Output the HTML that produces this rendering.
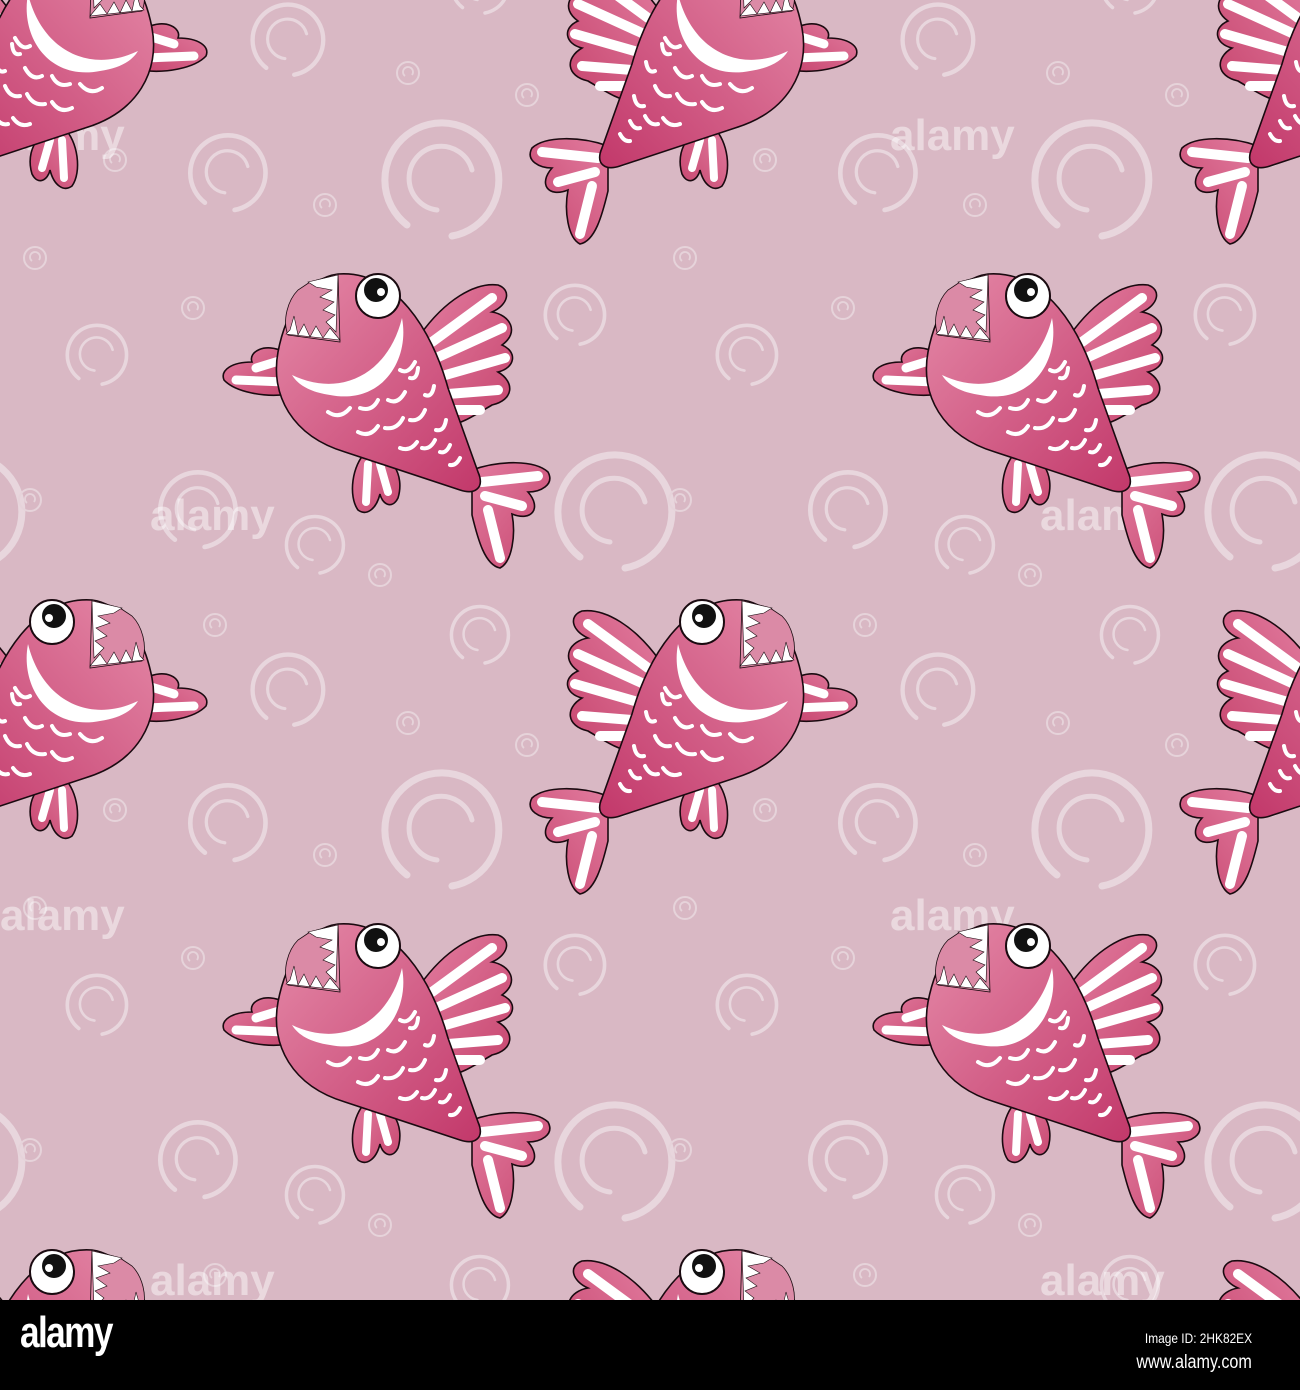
<!DOCTYPE html>
<html><head><meta charset="utf-8"><style>
html,body{margin:0;padding:0;background:#000;width:1300px;height:1390px;overflow:hidden}
#w{position:relative;width:1300px;height:1390px;overflow:hidden;background:#000}
svg{position:absolute;left:0;top:0}
.bar{position:absolute;left:0;top:1300px;width:1300px;height:90px;background:#000;color:#fff;font-family:"Liberation Sans",sans-serif;overflow:hidden}
</style></head><body><div id="w">
<svg width="1300" height="1300" viewBox="0 0 1300 1300">
<defs>
<linearGradient id="g" x1="0" y1="0" x2="1" y2="1">
<stop offset="0" stop-color="#e58aa8"/><stop offset="1" stop-color="#c2386a"/></linearGradient>
<linearGradient id="gf" x1="0" y1="0" x2="1" y2="1">
<stop offset="0" stop-color="#e27c9f"/><stop offset="1" stop-color="#c7466f"/></linearGradient>
<g id="sw" fill="none" stroke="#e8d6dd" stroke-linecap="round">
<path d="M-35,45 A57,57 0 1 1 10,56" stroke-width="7"/>
<path d="M-5,30 A32,32 0 1 1 30,-10" stroke-width="5"/>
</g>
<g id="sws" fill="none" stroke="#e6d3da">
<circle r="55" stroke-width="10"/><path d="M-15,15 A25,25 0 1 1 20,10" stroke-width="9"/>
</g>
<pattern id="p" patternUnits="userSpaceOnUse" x="0" y="0" width="650" height="650">
<use href="#sw" transform="translate(442,180)"/>
<use href="#sw" transform="translate(615,512)"/>
<use href="#sw" transform="translate(-35,512)"/>
<use href="#sw" transform="translate(228,173) scale(0.66)"/>
<use href="#sw" transform="translate(198,510) scale(0.66)"/>
<use href="#sw" transform="translate(575,315) scale(0.52)"/>
<use href="#sw" transform="translate(97,355) scale(0.52)"/>
<use href="#sw" transform="translate(288,40) scale(0.62)"/>
<use href="#sw" transform="translate(480,-15) scale(0.5)"/>
<use href="#sw" transform="translate(480,635) scale(0.5)"/>
<use href="#sw" transform="translate(315,545) scale(0.5)"/>
<use href="#sws" transform="translate(408,73) scale(0.2)"/>
<use href="#sws" transform="translate(527,95) scale(0.2)"/>
<use href="#sws" transform="translate(325,205) scale(0.2)"/>
<use href="#sws" transform="translate(35,258) scale(0.2)"/>
<use href="#sws" transform="translate(193,308) scale(0.2)"/>
<use href="#sws" transform="translate(408,385) scale(0.2)"/>
<use href="#sws" transform="translate(380,575) scale(0.2)"/>
<use href="#sws" transform="translate(215,625) scale(0.2)"/>
<use href="#sws" transform="translate(30,500) scale(0.2)"/>
<use href="#sws" transform="translate(620,155) scale(0.2)"/>
<use href="#sws" transform="translate(115,160) scale(0.2)"/>
</pattern>
<g id="fish" stroke="#1a0a10" stroke-width="1.6">
<!-- dorsal fin -->
<path d="M210,75 C235,40 265,22 288,25 C302,30 298,45 282,52 C300,55 310,72 292,85 C308,92 305,108 288,112 C305,122 304,140 282,145 C265,155 250,165 238,165 Z" fill="url(#gf)"/>
<path d="M222,82 L282,38 M226,98 L292,68 M232,116 L295,98 M238,134 L288,130 M244,150 L270,150" stroke="#fff" stroke-width="10" fill="none" stroke-linecap="round"/>
<!-- tail -->
<path d="M262,210 C290,200 325,200 338,212 C345,225 330,232 318,232 C332,248 322,262 302,254 C306,275 302,302 290,308 C275,305 268,280 262,255 Z" fill="url(#gf)"/>
<path d="M272,222 L328,216 M275,236 L312,246 M278,250 L290,298" stroke="#fff" stroke-width="10" fill="none" stroke-linecap="round"/>
<!-- bottom fin -->
<path d="M156,192 C182,192 195,215 188,238 C182,250 172,244 170,234 C166,250 156,256 148,250 C138,236 142,205 156,192 Z" fill="url(#gf)"/>
<path d="M158,204 L156,242 M170,204 L178,232" stroke="#fff" stroke-width="8" fill="none" stroke-linecap="round"/>
<!-- pectoral -->
<path d="M74,92 C55,82 38,92 42,102 C22,102 10,110 14,120 C25,132 55,138 80,134 Z" fill="url(#gf)"/>
<path d="M72,100 L46,108 M74,122 L26,120" stroke="#fff" stroke-width="9" fill="none" stroke-linecap="round"/>
<!-- body -->
<path d="M128,14 C185,10 222,70 238,128 L268,212 C275,228 265,235 250,230 L135,192 C82,176 60,135 68,92 C76,50 98,18 128,14 Z" fill="url(#g)"/>
<!-- mouth -->
<path d="M100,22 L128,14 L130,82 L78,75 C72,60 78,40 88,30 Z" fill="#db8aa6" stroke-width="0.8"/>
<path d="M98,22 L128,15 L126,72 L116,62 L125,55 L113,50 L124,42 L110,37 L122,30 L106,27 Z" fill="#fff" stroke-width="0.6"/>
<path d="M76,74 L130,80 L120,68 L113,78 L106,66 L100,77 L94,64 L88,75 L84,56 L80,70 Z" fill="#fff" stroke-width="0.6"/>
<!-- eye -->
<circle cx="168" cy="36" r="22" fill="#fff" stroke-width="2"/>
<circle cx="166" cy="30" r="12" fill="#111" stroke="none"/>
<circle cx="171" cy="32" r="4" fill="#fff" stroke="none"/>
<!-- smile -->
<path d="M82,115 C130,138 178,115 192,58 C200,100 172,145 120,135 C100,132 88,125 82,115 Z" fill="#fff" stroke="none"/>
<!-- scales -->
<g fill="none" stroke="#fff" stroke-width="4" stroke-linecap="round">
<path d="M118,152 Q130,160 140,148 M150,148 Q162,152 168,140 M178,140 Q188,145 195,132 M200,118 Q207,120 208,108 M190,110 Q198,115 205,102"/>
<path d="M148,172 Q160,178 168,166 M175,168 Q187,170 193,158 M200,160 Q210,162 215,150 M215,135 Q222,138 224,126"/>
<path d="M190,188 Q200,192 207,182 M212,188 Q220,190 225,180 M230,192 Q236,194 240,185 M240,205 Q246,206 250,198 M226,170 Q234,172 236,160"/>
</g>
</g>
<g id="wm" fill="#fff" fill-opacity="0.45" font-family="Liberation Sans,sans-serif" font-weight="bold" font-size="44"><text>alamy</text></g>
</defs>
<rect width="1300" height="1300" fill="#d9b8c4"/>
<rect width="1300" height="1300" fill="url(#p)"/>
<use href="#wm" x="890" y="150"/>
<use href="#wm" x="150" y="530"/>
<use href="#wm" x="1040" y="530"/>
<use href="#wm" x="0" y="930"/>
<use href="#wm" x="890" y="930"/>
<use href="#wm" x="150" y="1295"/>
<use href="#wm" x="1040" y="1295"/>
<use href="#wm" x="0" y="150"/>
<use href="#fish" transform="translate(210,260)"/>
<use href="#fish" transform="translate(860,260)"/>
<use href="#fish" transform="translate(210,910)"/>
<use href="#fish" transform="translate(860,910)"/>
<use href="#fish" transform="translate(-440,-390)"/>
<use href="#fish" transform="translate(860,-390)"/>
<use href="#fish" transform="translate(220,586) scale(-1,1)"/>
<use href="#fish" transform="translate(870,586) scale(-1,1)"/>
<use href="#fish" transform="translate(1520,586) scale(-1,1)"/>
<use href="#fish" transform="translate(220,-64) scale(-1,1)"/>
<use href="#fish" transform="translate(870,-64) scale(-1,1)"/>
<use href="#fish" transform="translate(1520,-64) scale(-1,1)"/>
<use href="#fish" transform="translate(220,1236) scale(-1,1)"/>
<use href="#fish" transform="translate(870,1236) scale(-1,1)"/>
<use href="#fish" transform="translate(1520,1236) scale(-1,1)"/>
</svg>
<div class="bar">
<div style="position:absolute;left:20px;top:8px;font-size:44px;font-weight:bold;letter-spacing:-2px;transform:scaleX(0.8);transform-origin:left">alamy</div>
<div style="position:absolute;right:48px;top:30px;font-size:14px;transform:scaleX(0.85);transform-origin:right">Image ID: 2HK82EX</div>
<div style="position:absolute;right:48px;top:52px;font-size:19px;transform:scaleX(0.85);transform-origin:right">www.alamy.com</div>
</div>
</div></body></html>
